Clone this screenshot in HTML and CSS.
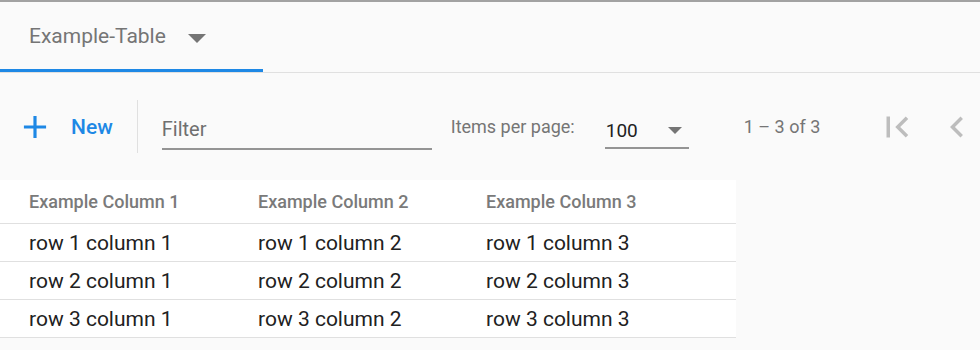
FILE: index.html
```html
<!DOCTYPE html>
<html lang="en">
<head>
<meta charset="utf-8">
<title>Example-Table</title>
<link rel="stylesheet" href="styles.css">
</head>
<body>
<div class="topline"></div>
<nav class="tabs">
  <div class="tab active">
    <span class="tab-label">Example-Table</span>
    <svg class="tab-arrow" viewBox="0 0 18 9" width="18" height="9"><polygon points="0,0 18,0 9,9" fill="#757575"/></svg>
  </div>
</nav>
<section class="toolbar">
  <button class="new-btn">
    <svg class="plus" viewBox="0 0 24 24" width="38" height="38"><path d="M19 13h-6v6h-2v-6H5v-2h6V5h2v6h6v2z" fill="#1e88e5"/></svg>
    <span>New</span>
  </button>
  <div class="divider"></div>
  <div class="filter"><span class="placeholder">Filter</span></div>
  <div class="paginator">
    <span class="ipp-label">Items per page:</span>
    <div class="select">
      <span class="select-value">100</span>
      <svg class="select-arrow" viewBox="0 0 14 7" width="14" height="7"><polygon points="0,0 14,0 7,7" fill="#757575"/></svg>
    </div>
    <span class="range">1 – 3 of 3</span>
    <button class="icon-btn first"><svg viewBox="0 0 24 24" width="42" height="42"><path d="M18.41 16.59L13.82 12l4.59-4.59L17 6l-6 6 6 6zM6 6h2v12H6z" fill="#bdbdbd"/></svg></button>
    <button class="icon-btn"><svg viewBox="0 0 24 24" width="42" height="42"><path d="M15.41 7.41L14 6l-6 6 6 6 1.41-1.41L10.83 12z" fill="#bdbdbd"/></svg></button>
  </div>
</section>
<table class="data">
  <colgroup><col class="c1"><col class="c2"><col class="c3"></colgroup>
  <thead>
    <tr><th>Example Column 1</th><th>Example Column 2</th><th>Example Column 3</th></tr>
  </thead>
  <tbody>
    <tr><td>row 1 column 1</td><td>row 1 column 2</td><td>row 1 column 3</td></tr>
    <tr><td>row 2 column 1</td><td>row 2 column 2</td><td>row 2 column 3</td></tr>
    <tr><td>row 3 column 1</td><td>row 3 column 2</td><td>row 3 column 3</td></tr>
  </tbody>
</table>
</body>
</html>
```
FILE: styles.css
```css
html, body {
  margin: 0;
  padding: 0;
  background: #fafafa;
  overflow: hidden;
  font-family: Roboto, "Liberation Sans", Arial, sans-serif;
}
.topline {
  height: 2px;
  background: #a2a2a2;
}
.tabs {
  display: flex;
  box-sizing: border-box;
  height: 71px;
  border-bottom: 1px solid #e0e0e0;
}
.tab {
  width: 263px;
  box-sizing: border-box;
  padding-left: 29px;
  display: flex;
  align-items: center;
  border-bottom: 3px solid #1e88e5;
  height: 70px;
}
.tab-label {
  font-size: 21px;
  line-height: 24px;
  color: #757575;
}
.tab-arrow {
  margin-left: 22px;
  margin-top: 6px;
}
.toolbar {
  display: flex;
  align-items: center;
  height: 53px;
  padding: 27px 0;
  white-space: nowrap;
}
.toolbar > *, .paginator > * {
  flex-shrink: 0;
}
.new-btn {
  display: flex;
  align-items: center;
  background: none;
  border: 0;
  padding: 0 0 0 16px;
  margin: 0;
  font-family: inherit;
  font-size: 21px;
  font-weight: 500;
  color: #1e88e5;
}
.new-btn span {
  margin-left: 17px;
}
.divider {
  width: 1px;
  align-self: stretch;
  background: #e0e0e0;
  margin-left: 24px;
}
.filter {
  margin-left: 24px;
  width: 270px;
  height: 50px;
  box-sizing: border-box;
  padding-top: 17px;
  border-bottom: 2px solid #949494;
  align-self: flex-start;
}
.placeholder {
  font-size: 20px;
  line-height: 24px;
  color: #6f6f6f;
}
.paginator {
  display: flex;
  align-items: center;
  margin-left: 19px;
}
.ipp-label {
  font-size: 18px;
  color: #757575;
}
.select {
  margin-left: 30px;
  width: 84px;
  box-sizing: border-box;
  display: flex;
  align-items: center;
  justify-content: space-between;
  padding: 6px 7px 4px 1px;
  border-bottom: 2px solid #949494;
  margin-top: 8px;
}
.select-value {
  font-size: 19px;
  line-height: 24px;
  color: #212121;
}
.range {
  margin-left: 55px;
  font-size: 18px;
  color: #757575;
}
.icon-btn {
  width: 60px;
  height: 60px;
  padding: 0;
  border: 0;
  background: none;
  display: flex;
  align-items: center;
  justify-content: center;
}
.icon-btn.first {
  margin-left: 47px;
}
.data {
  border-collapse: collapse;
  background: #fff;
  width: 736px;
  table-layout: fixed;
}
.c1 { width: 258px; }
.c2 { width: 228px; }
.c3 { width: 250px; }
.data th {
  text-align: left;
  font-weight: 500;
  font-size: 18px;
  color: #7a7a7a;
  height: 43px;
  padding: 0;
  border-bottom: 1px solid #e0e0e0;
}
.data td {
  font-size: 21px;
  color: #212121;
  height: 37px;
  padding: 0;
  border-bottom: 1px solid #e0e0e0;
}
.data th:first-child, .data td:first-child {
  padding-left: 29px;
}
```
